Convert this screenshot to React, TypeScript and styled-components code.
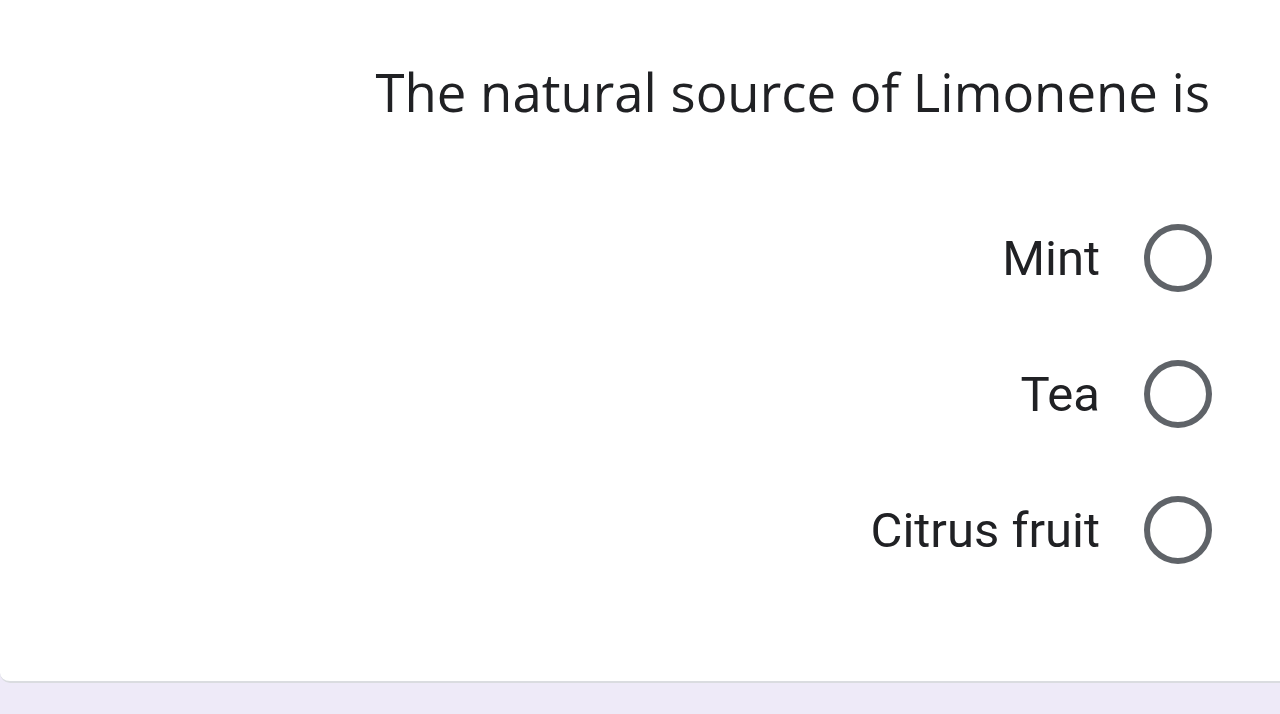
import React from "react";
import styled, { createGlobalStyle } from "styled-components";

const Global = createGlobalStyle`
  html, body { margin: 0; padding: 0; background: #eeeaf8; }
  #root { min-height: 714px; }
`;

const Page = styled.div`
  width: 1280px;
  height: 714px;
  overflow: hidden;
  background: #eeeaf8;
`;

const Card = styled.div`
  box-sizing: border-box;
  width: 1300px;
  height: 683px;
  background: #ffffff;
  border-bottom: 2px solid #dadce0;
  border-radius: 0 0 0 10px;
  padding: 60px 90px 0 0;
  display: flex;
  flex-direction: column;
  align-items: flex-end;
`;

const Title = styled.div`
  font-family: "Open Sans", sans-serif;
  font-size: 52.7px;
  line-height: 64px;
  color: #202124;
`;

const Options = styled.div`
  margin-top: 100px;
  margin-right: -2px;
  display: flex;
  flex-direction: column;
  gap: 68px;
  align-items: flex-end;
`;

const Option = styled.label`
  display: flex;
  align-items: center;
  gap: 44px;
  height: 68px;
`;

const Label = styled.span`
  font-family: Roboto, sans-serif;
  font-size: 49px;
  color: #202124;
`;

const Radio = styled.span`
  box-sizing: border-box;
  width: 68px;
  height: 68px;
  border-radius: 50%;
  border: 6px solid #5f6368;
`;

export default function App() {
  const opts = ["Mint", "Tea", "Citrus fruit"];
  return (
    <Page>
      <Global />
      <Card>
        <Title>The natural source of Limonene is</Title>
        <Options>
          {opts.map((o) => (
            <Option key={o}>
              <Label>{o}</Label>
              <Radio />
            </Option>
          ))}
        </Options>
      </Card>
    </Page>
  );
}
